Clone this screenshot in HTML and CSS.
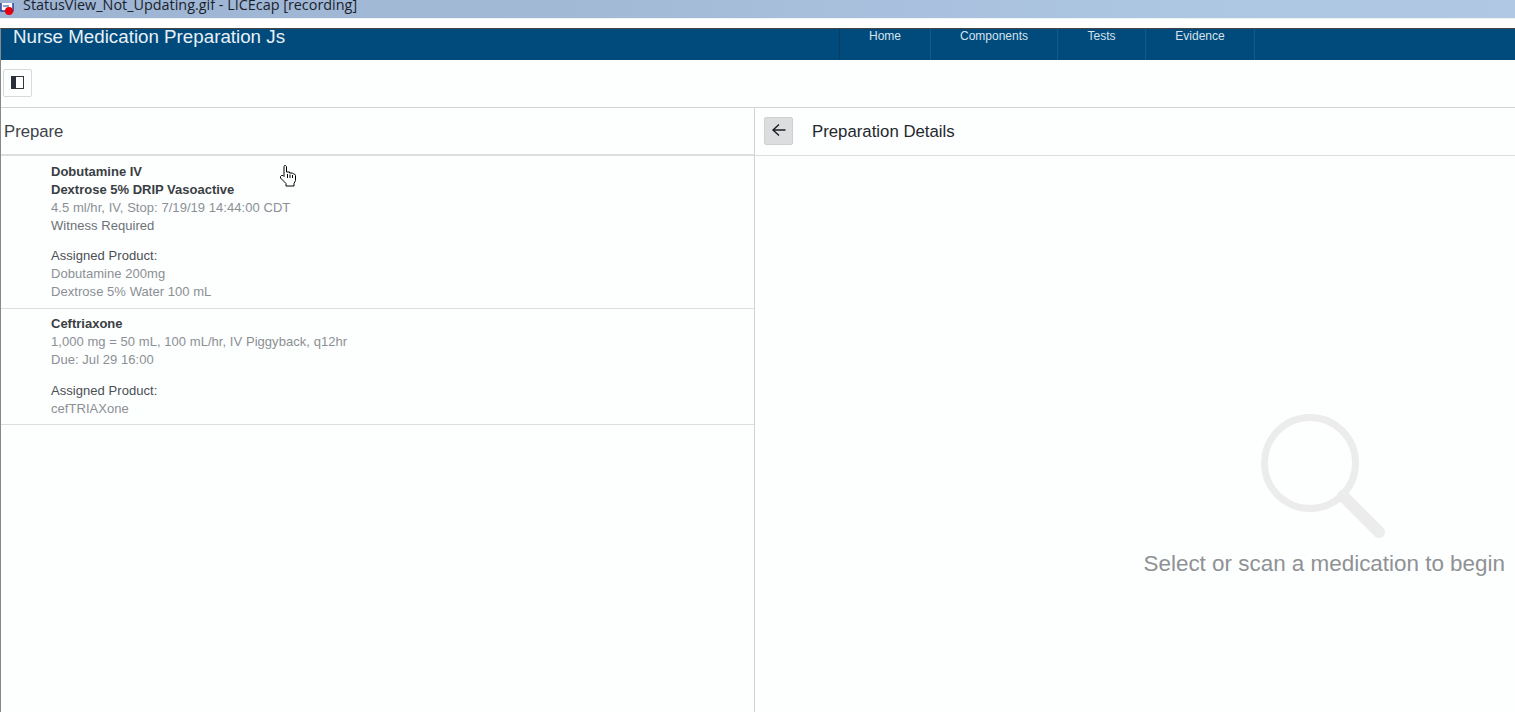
FILE: index.html
```html
<!DOCTYPE html>
<html lang="en">
<head>
<meta charset="utf-8">
<title>Nurse Medication Preparation Js</title>
<link rel="stylesheet" href="styles.css">
</head>
<body>
<div class="titlebar">
  <svg class="app-icon" width="17" height="14" viewBox="0 0 17 14"><path d="M1 0v8h12V0" fill="#fff" stroke="#2a3f9a" stroke-width="1.5"/><path d="M3 3h6" stroke="#2a3f9a"/><circle cx="9" cy="8" r="4" fill="#e8000c"/></svg>
  <span class="title-text">StatusView_Not_Updating.gif - LICEcap [recording]</span>
</div>
<div class="gap"></div>
<div class="app">
  <header class="banner">
    <div class="brand">Nurse Medication Preparation Js</div>
    <nav class="nav">
      <a class="nav-item nav-home">Home</a>
      <a class="nav-item nav-components">Components</a>
      <a class="nav-item nav-tests">Tests</a>
      <a class="nav-item nav-evidence">Evidence</a>
    </nav>
  </header>
  <div class="toolbar">
    <button class="toggle" aria-label="Toggle panel">
      <svg width="14" height="14" viewBox="0 0 14 14"><rect x="0.5" y="0.5" width="12" height="12" fill="#fff" stroke="#33383f"/><rect x="0" y="0" width="5" height="13" fill="#2b3038"/></svg>
    </button>
  </div>
  <main class="split">
    <section class="left">
      <div class="left-head">Prepare</div>
      <article class="med med-first">
        <div class="name">Dobutamine IV</div>
        <div class="name">Dextrose 5% DRIP Vasoactive</div>
        <div class="muted">4.5 ml/hr, IV, Stop: 7/19/19 14:44:00 CDT</div>
        <div class="dim">Witness Required</div>
        <div class="label">Assigned Product:</div>
        <div class="muted">Dobutamine 200mg</div>
        <div class="muted">Dextrose 5% Water 100 mL</div>
      </article>
      <article class="med med-second">
        <div class="name">Ceftriaxone</div>
        <div class="muted">1,000 mg = 50 mL, 100 mL/hr, IV Piggyback, q12hr</div>
        <div class="muted">Due: Jul 29 16:00</div>
        <div class="label label-second">Assigned Product:</div>
        <div class="muted">cefTRIAXone</div>
      </article>
    </section>
    <section class="right">
      <div class="right-head">
        <button class="back" aria-label="Back">
          <svg width="16" height="16" viewBox="0 0 16 16" fill="none" stroke="#1c1f24" stroke-width="1.400"><path d="M14.500 8H2M8 2.500L2 8l6 5.500"/></svg>
        </button>
        <div class="right-title">Preparation Details</div>
      </div>
      <div class="empty">
        <svg class="glass" width="126" height="126" viewBox="0 0 126 126" fill="none"><circle cx="49" cy="49" r="45.500" stroke="#ececec" stroke-width="7"/><path d="M82 82l36 36" stroke="#ececec" stroke-width="12" stroke-linecap="round"/></svg>
        <div class="empty-text">Select or scan a medication to begin</div>
      </div>
    </section>
  </main>
</div>
<svg class="cursor" width="18" height="23" viewBox="0 0 18 23"><path d="M5.500.5h1l1 1V7h3v1h3l1 1h1l1 1.500v5L15 18.500V21H7v-2.500L1.500 13v-1.500l1-1H4l1 1V1.500z" fill="#fff" stroke="#000"/><path d="M8.500 9v4M11 9.500V13M13.500 10v3" stroke="#000"/></svg>
</body>
</html>
```
FILE: styles.css
```css
* { box-sizing: border-box; }
html, body { margin: 0; height: 712px; overflow: hidden; }
body { background: #fdfefe; font-family: "Liberation Sans", Arial, sans-serif; position: relative; }
.titlebar {
  height: 18px; display: flex; align-items: flex-end; overflow: hidden;
  background: linear-gradient(90deg, #9db4d3 0%, #a3bad7 40%, #a9c1de 60%, #adc6e2 80%, #b0c8e4 100%);
}
.app-icon { flex: none; margin: 0 6px 1px 0; align-self: flex-end; }
.title-text { font-family: "Open Sans", sans-serif; font-size: 14.400px; line-height: 18px; color: #1a1f2b; white-space: nowrap; position: relative; top: -4px; }
.gap { height: 10px; background: #fff; border-top: 1px solid #eef3f6; }
.app { height: 684px; display: flex; flex-direction: column; border-left: 1px solid #888; border-top: 1px solid #444; }
.banner { height: 31px; background: #004b7c; display: flex; color: #e8f0f6; flex: none; }
.brand { font-size: 18.750px; line-height: 15px; padding-left: 12px; width: 838px; flex: none; }
.nav { display: flex; height: 31px; border-left: 1px solid #0a3b60; }
.nav-item { font-size: 12px; line-height: 14px; text-align: center; border-right: 1px solid #0f5c91; color: #d5e2ec; }
.nav-home { width: 91px; }
.nav-components { width: 127px; }
.nav-tests { width: 88px; }
.nav-evidence { width: 109px; }
.toolbar { height: 48px; flex: none; border-bottom: 1px solid #d2d4d4; padding: 9px 0 0 2px; background: #fdfefe; }
.toggle { width: 29px; height: 28px; padding: 0; background: #fdfefe; border: 1px solid #d8d9da; border-radius: 2px; display: flex; align-items: center; justify-content: center; }
.toggle svg { margin-left: 1px; }
.split { flex: 1; display: flex; min-height: 0; }
.left { width: 754px; flex: none; border-right: 1px solid #d2d4d4; color: #24282d; }
.left-head { height: 48px; padding: 15px 0 0 3px; font-size: 16.700px; line-height: 17px; color: #3e4247; border-bottom: 2px solid #dcdede; }
.med { border-bottom: 1px solid #dcdede; padding: 7px 0 0 50px; font-size: 13px; line-height: 18px; letter-spacing: 0.050px; }
.med-first { height: 153px; }
.med-second { height: 116px; padding-top: 6px; }
.name { font-weight: bold; color: #3a3e43; letter-spacing: 0; }
.muted { color: #8b9095; }
.dim { color: #6c7176; }
.label { margin-top: 12px; color: #4b4f54; }
.label-second { margin-top: 13px; }
.right { flex: 1; min-width: 0; display: flex; flex-direction: column; }
.right-head { height: 48px; flex: none; border-bottom: 1px solid #dcdede; display: flex; align-items: center; padding: 0 0 0 9px; }
.back { width: 29px; height: 28px; padding: 0 0 2px; margin-bottom: 1px; background: #dcddde; border: 1px solid #cfd0d1; border-radius: 2px; display: flex; align-items: center; justify-content: center; }
.right-title { font-size: 16.800px; color: #24282d; margin-left: 19px; }
.empty { flex: 1; display: flex; flex-direction: column; align-items: flex-end; padding-top: 258px; }
.glass { margin-right: 128px; display: block; }
.empty-text { font-size: 22.430px; line-height: 26px; color: #8f9295; margin-right: 10px; margin-top: 11px; white-space: nowrap; }
.cursor { position: absolute; left: 279px; top: 165px; }
```
